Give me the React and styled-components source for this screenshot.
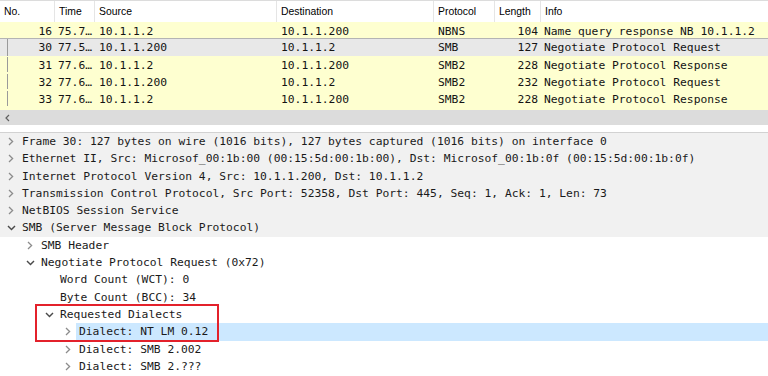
import React from "react";
import styled, { createGlobalStyle } from "styled-components";

const GlobalStyle = createGlobalStyle`
  html, body {
    margin: 0;
    padding: 0;
    background: #ffffff;
    overflow: hidden;
  }
`;

const MONO = `"DejaVu Sans Mono", "Liberation Mono", monospace`;
const COLS = "55px 40px 182px 157px 61px 46px 1fr";

const packets = [
  { no: 16, time: "75.7…", src: "10.1.1.2", dst: "10.1.1.200", proto: "NBNS", len: 104, info: "Name query response NB 10.1.1.2" },
  { no: 30, time: "77.5…", src: "10.1.1.200", dst: "10.1.1.2", proto: "SMB", len: 127, info: "Negotiate Protocol Request", selected: true, related: true },
  { no: 31, time: "77.6…", src: "10.1.1.2", dst: "10.1.1.200", proto: "SMB2", len: 228, info: "Negotiate Protocol Response", related: true },
  { no: 32, time: "77.6…", src: "10.1.1.200", dst: "10.1.1.2", proto: "SMB2", len: 232, info: "Negotiate Protocol Request", related: true },
  { no: 33, time: "77.6…", src: "10.1.1.2", dst: "10.1.1.200", proto: "SMB2", len: 228, info: "Negotiate Protocol Response", related: true },
];

const tree = [
  { level: 0, open: false, text: "Frame 30: 127 bytes on wire (1016 bits), 127 bytes captured (1016 bits) on interface 0", shaded: true },
  { level: 0, open: false, text: "Ethernet II, Src: Microsof_00:1b:00 (00:15:5d:00:1b:00), Dst: Microsof_00:1b:0f (00:15:5d:00:1b:0f)", shaded: true },
  { level: 0, open: false, text: "Internet Protocol Version 4, Src: 10.1.1.200, Dst: 10.1.1.2", shaded: true },
  { level: 0, open: false, text: "Transmission Control Protocol, Src Port: 52358, Dst Port: 445, Seq: 1, Ack: 1, Len: 73", shaded: true },
  { level: 0, open: false, text: "NetBIOS Session Service", shaded: true },
  { level: 0, open: true, text: "SMB (Server Message Block Protocol)", shaded: true },
  { level: 1, open: false, text: "SMB Header" },
  { level: 1, open: true, text: "Negotiate Protocol Request (0x72)" },
  { level: 2, leaf: true, text: "Word Count (WCT): 0" },
  { level: 2, leaf: true, text: "Byte Count (BCC): 34" },
  { level: 2, open: true, text: "Requested Dialects" },
  { level: 3, open: false, text: "Dialect: NT LM 0.12", selected: true },
  { level: 3, open: false, text: "Dialect: SMB 2.002" },
  { level: 3, open: false, text: "Dialect: SMB 2.???" },
];

const Window = styled.div`
  width: 768px;
  height: 376px;
  display: flex;
  flex-direction: column;
  overflow: hidden;
  background: #ffffff;
`;

const Header = styled.div`
  display: grid;
  grid-template-columns: ${COLS};
  height: 21px;
  border-top: 1px solid #dcdcdc;
  background: #ffffff;
  font-family: "Liberation Sans", Arial, sans-serif;
  font-size: 10.4px;
  color: #000;
`;

const HeadCell = styled.div`
  padding: 0 4px;
  line-height: 21px;
  border-right: 1px solid #e5e5e5;
  white-space: nowrap;
  &:last-child { border-right: none; }
`;

const PacketBody = styled.div`
  height: 88px;
  background: #feffd0;
  overflow: hidden;
`;

const PacketRow = styled.div`
  display: grid;
  grid-template-columns: ${COLS};
  box-sizing: border-box;
  font-family: ${MONO};
  font-size: 11.3px;
  line-height: 17px;
  color: #141414;
  background: ${(p) => (p.$selected ? "#e8e8e8" : "#feffd0")};
  border-top: 1px solid ${(p) => (p.$selected ? "#b4b4b4" : "transparent")};
  border-bottom: 1px solid ${(p) => (p.$selected ? "#b4b4b4" : "transparent")};
  margin: ${(p) => (p.$selected ? "-1px 0" : "0")};
  height: ${(p) => (p.$selected ? "19px" : "17px")};
`;

const Cell = styled.div`
  position: relative;
  padding: 0 ${(p) => (p.$right ? "3px" : "4px")} 0 ${(p) => (p.$tight ? "3px" : "4px")};
  text-align: ${(p) => (p.$right ? "right" : "left")};
  white-space: nowrap;
  overflow: hidden;
`;

const Related = styled.span`
  position: absolute;
  left: 7px;
  top: ${(p) => (p.$start ? "0" : "-1px")};
  bottom: -1px;
  width: 1px;
  background: #9a9a9a;
`;

const HScroll = styled.div`
  height: 15px;
  background: #dcdcdc;
  display: flex;
  align-items: center;
  padding-left: 5px;
`;

const Splitter = styled.div`
  height: 7px;
  background: #ffffff;
  border-bottom: 1px solid #d2d2d2;
`;

const Details = styled.div`
  position: relative;
  flex: 1;
  background: #ffffff;
  font-family: ${MONO};
  font-size: 11.3px;
  color: #1a1a1a;
`;

const TreeRow = styled.div`
  display: flex;
  align-items: stretch;
  height: 17.3px;
  line-height: 17.3px;
  padding-left: ${(p) => 3 + p.$level * 19}px;
  background: ${(p) => (p.$shaded ? "#f1f1f1" : "#ffffff")};
  white-space: nowrap;
`;

const Toggle = styled.span`
  width: 16px;
  flex: none;
  display: flex;
  align-items: center;
  justify-content: center;
`;

const Label = styled.span`
  flex: 1;
  padding-left: 3px;
  background: ${(p) => (p.$selected ? "#cce8ff" : "transparent")};
`;

const Highlight = styled.div`
  position: absolute;
  left: 35px;
  top: 171px;
  width: 184px;
  height: 38px;
  box-sizing: border-box;
  border: 2px solid #e3212b;
  pointer-events: none;
`;

function Chevron({ open }) {
  if (open) {
    return (
      <svg width="9" height="6" viewBox="0 0 9 6">
        <path d="M1 1 L4.5 4.6 L8 1" fill="none" stroke="#4a4a4a" strokeWidth="1.4" />
      </svg>
    );
  }
  return (
    <svg width="6" height="9" viewBox="0 0 6 9">
      <path d="M1 1 L4.6 4.5 L1 8" fill="none" stroke="#8c8c8c" strokeWidth="1.3" />
    </svg>
  );
}

export default function App() {
  return (
    <Window>
      <GlobalStyle />
      <Header>
        <HeadCell>No.</HeadCell>
        <HeadCell>Time</HeadCell>
        <HeadCell>Source</HeadCell>
        <HeadCell>Destination</HeadCell>
        <HeadCell>Protocol</HeadCell>
        <HeadCell>Length</HeadCell>
        <HeadCell>Info</HeadCell>
      </Header>
      <PacketBody>
        {packets.map((p) => (
          <PacketRow key={p.no} $selected={p.selected}>
            <Cell $right>
              {p.related && <Related $start={p.selected} />}
              {p.no}
            </Cell>
            <Cell $tight>{p.time}</Cell>
            <Cell>{p.src}</Cell>
            <Cell>{p.dst}</Cell>
            <Cell>{p.proto}</Cell>
            <Cell $right>{p.len}</Cell>
            <Cell $tight>{p.info}</Cell>
          </PacketRow>
        ))}
      </PacketBody>
      <HScroll>
        <svg width="5" height="8" viewBox="0 0 5 8">
          <path d="M4 1 L1 4 L4 7" fill="none" stroke="#606060" strokeWidth="1.2" />
        </svg>
      </HScroll>
      <Splitter />
      <Details>
        {tree.map((n, i) => (
          <TreeRow key={i} $level={n.level} $shaded={n.shaded}>
            <Toggle>{!n.leaf && <Chevron open={n.open} />}</Toggle>
            <Label $selected={n.selected}>{n.text}</Label>
          </TreeRow>
        ))}
        <Highlight />
      </Details>
    </Window>
  );
}
